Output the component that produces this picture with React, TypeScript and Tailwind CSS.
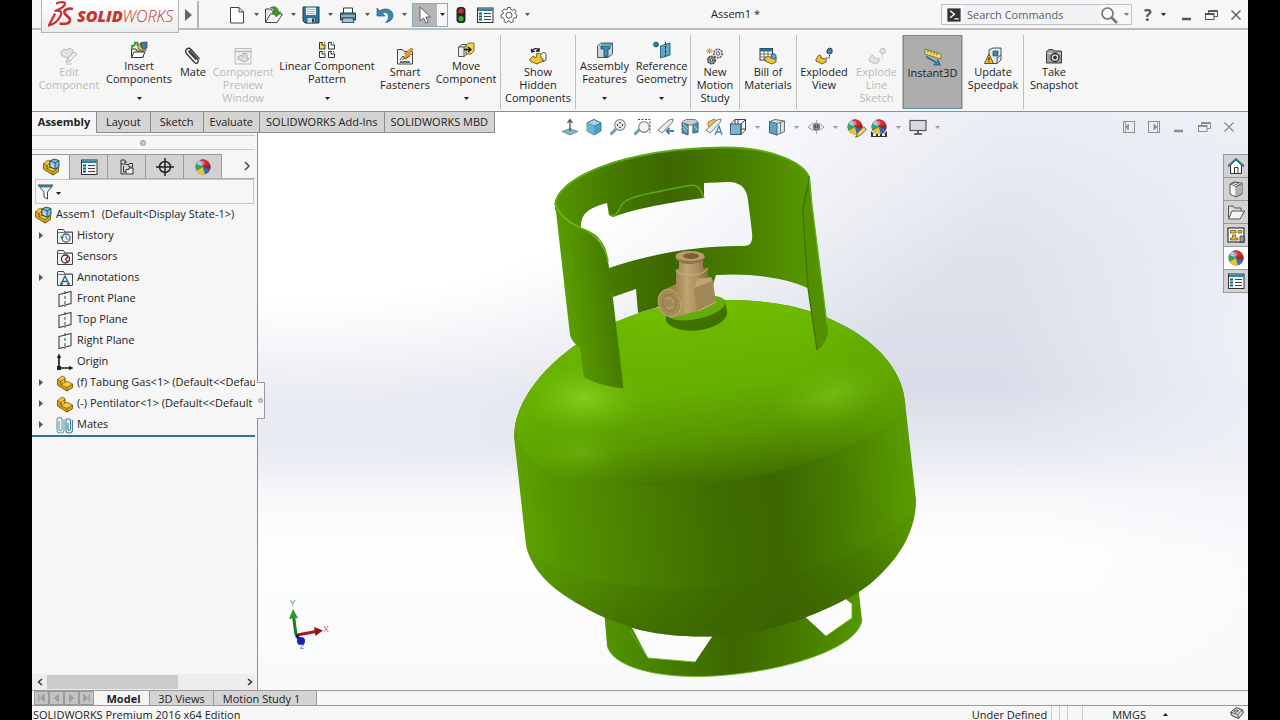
import type { ReactNode } from "react";

// ---------- Small shared pieces ----------

function Icon({ children, size = "size-[18px]", box = "0 0 18 18" }: { children: ReactNode; size?: string; box?: string }) {
    return (
        <svg viewBox={box} className={`${size} shrink-0`} fill="none" aria-hidden="true">
            {children}
        </svg>
    );
}

function Caret({ color = "#222" }: { color?: string }) {
    return (
        <svg viewBox="0 0 5 3" className="h-[3px] w-[5px] shrink-0" aria-hidden="true">
            <path d="M0 0H5L2.5 3Z" fill={color} />
        </svg>
    );
}

function PartShape() {
    return (
        <g stroke="#7a5f14" strokeWidth=".8" strokeLinejoin="round">
            <path d="M1.500 5.500L6 2L9 3.500V8L12 7.500L16.500 10V13.500L11 17L1.500 11Z" fill="#f5c93c" />
            <path d="M1.500 5.500L5 7.500V11L11 13.500L16.500 10V13.500L11 17L1.500 11Z" fill="#dca21c" />
            <path d="M5 7.500L9 4.500V8L5 11ZM11 13.500V17" />
        </g>
    );
}

const PartIcon = () => (
    <Icon>
        <PartShape />
    </Icon>
);

const AssemblyIcon = () => (
    <Icon>
        <PartShape />
        <path d="M8 3L12 1L17 2.500V9L13 11L8 9Z" fill="#7db9d6" stroke="#1f3f50" strokeWidth=".9" />
        <path d="M8 3L13 5V11L8 9Z" fill="#a9d3e6" stroke="#1f3f50" strokeWidth=".8" />
        <path d="M13 5L17 2.500" stroke="#1f3f50" strokeWidth=".8" />
    </Icon>
);

const BallIcon = () => (
    <Icon>
        <circle cx="9" cy="9" r="7.500" fill="#2f6db8" />
        <path d="M9 9L6 2A7.500 7.500 0 0 1 16 6Z" fill="#d22b2b" />
        <path d="M9 9L16 6A7.500 7.500 0 0 1 16 12Z" fill="#a82020" />
        <path d="M9 9L11 16.200A7.500 7.500 0 0 1 2.500 12.500Z" fill="#eac42f" />
        <path d="M9 9L2.500 12.500A7.500 7.500 0 0 1 2 6Z" fill="#3fa349" />
        <path d="M9 9L2 6A7.500 7.500 0 0 1 6 2Z" fill="#6fb0dd" />
        <path d="M9 9L11 16.200A7.500 7.500 0 0 0 16 12Z" fill="#2f6db8" />
        <ellipse cx="7" cy="5" rx="3.500" ry="2.200" fill="#fff" opacity=".4" />
    </Icon>
);

const ListIcon = () => (
    <Icon>
        <rect x="1.500" y="2" width="15.500" height="14.500" fill="#f4f8fa" stroke="#333" />
        <rect x="2" y="2.500" width="14.500" height="2.500" fill="#2b86a8" />
        <path d="M3 7.500H6M3 10.500H6M3 13.500H6" stroke="#1d5b78" strokeWidth="1.800" />
        <path d="M8 7.500H15M8 10.500H15M8 13.500H15" stroke="#444" strokeWidth="1" />
    </Icon>
);

// ---------- Title bar icons ----------

const NewIcon = () => (
    <Icon>
        <path d="M2.500 1.500H11L15.500 6V17H2.500Z" fill="#fff" stroke="#444" />
        <path d="M11 1.500V6H15.500" stroke="#444" />
    </Icon>
);

const OpenIcon = () => (
    <Icon size="size-5" box="0 0 20 20">
        <path d="M1.500 4H7L8.500 6H14V9L11 17H1.500Z" fill="#e4e4e4" stroke="#444" />
        <path d="M1.500 17.500L6.500 9H18.500L13 17.500Z" fill="#fafafa" stroke="#444" />
        <path d="M6.500 2.500C11 .5 14.500 3 14.500 7H17L12.500 12L8 7H10.500C10.500 5 9 3.500 6.500 2.500Z" fill="#3d9b2c" stroke="#23691a" strokeWidth=".6" />
    </Icon>
);

const SaveIcon = () => (
    <Icon>
        <path d="M1 1H17V17H3L1 15Z" fill="#2f7396" stroke="#173e52" />
        <rect x="4" y="1.500" width="10" height="7.500" fill="#e9eef0" />
        <path d="M5 3.500H13M5 5.500H13M5 7.500H13" stroke="#9fb0b8" strokeWidth=".8" />
        <rect x="5" y="11.500" width="8" height="5.500" fill="#c9d3d8" stroke="#173e52" strokeWidth=".6" />
        <rect x="10" y="12.500" width="2" height="4" fill="#1c3e50" />
    </Icon>
);

const PrintIcon = () => (
    <Icon>
        <path d="M4.500 7V2H13.500V7" fill="#fff" stroke="#333" />
        <path d="M1.500 7H16.500V14H1.500Z" fill="#4f7f97" stroke="#1e3a48" />
        <path d="M2 10H16" stroke="#cfdde4" />
        <path d="M4 12H14L15 16.500H3Z" fill="#9fc5d8" stroke="#1e3a48" strokeWidth=".8" />
    </Icon>
);

const UndoIcon = () => (
    <Icon>
        <path d="M1 2V10H9L6.500 7.500C9 5.500 13 7 12.500 11C12.300 13 11.500 15 9.500 16.500C14 16 17 13 17 9.500C17 3.500 9 1 3.800 4.800Z" fill="#3d86ad" stroke="#235b7a" strokeWidth=".7" />
    </Icon>
);

const CursorIcon = () => (
    <Icon>
        <path d="M4 1L14.500 11H9.800L12.300 16L10 17L7.600 12L4 15Z" fill="#fff" stroke="#555" strokeWidth=".9" />
    </Icon>
);

const TrafficIcon = () => (
    <Icon>
        <rect x="4.500" y="1" width="9" height="16" rx="3.500" fill="#242424" />
        <circle cx="9" cy="5" r="2.700" fill="#b5342f" />
        <circle cx="9" cy="12.700" r="2.700" fill="#41a63c" />
    </Icon>
);

const GearIcon = () => (
    <Icon>
        <path d="M7.600 1.500H10.400L10.900 3.600L12.500 4.300L14.400 3.200L16.200 5.200L15 7L15.500 8.200L17 9.500L16 12L14 12L13 13.500L13.300 15.700L10.700 16.700L9.400 15H8L6.500 16.700L4 15.500L4.400 13.300L3.500 12.200L1.300 11.800L1 9L3 8L3.500 6.500L2.200 4.800L4.200 2.800L6 4L7.200 3.500Z" fill="#fff" stroke="#555" strokeLinejoin="round" />
        <circle cx="9" cy="9.200" r="3" stroke="#555" />
    </Icon>
);

// ---------- Window buttons ----------

const MinimizeIcon = () => <Icon><path d="M4 13H13" stroke="currentColor" strokeWidth="2.500" /></Icon>;
const RestoreIcon = () => (
    <Icon>
        <path d="M6.500 7V4.500H15.500V10.500H12" stroke="currentColor" />
        <path d="M6.500 5.500H15.500" stroke="currentColor" />
        <rect x="3.500" y="7.500" width="8.500" height="6" stroke="currentColor" />
        <path d="M3.500 8.500H12" stroke="currentColor" />
    </Icon>
);
const CloseIcon = () => <Icon><path d="M4.500 4.500L13.500 13.500M13.500 4.500L4.500 13.500" stroke="currentColor" strokeWidth="1.300" /></Icon>;
const PanelIcon = ({ side }: { side: "left" | "right" }) => (
    <Icon>
        <rect x="3.500" y="3.500" width="11" height="11" stroke="currentColor" />
        {side === "left" ? (
            <path d="M5.500 4V14M8.500 6V12L5.500 9Z" stroke="currentColor" fill="currentColor" strokeWidth=".8" />
        ) : (
            <path d="M12.500 4V14M9 6V12L12 9Z" stroke="currentColor" fill="currentColor" strokeWidth=".8" />
        )}
    </Icon>
);

// ---------- Ribbon ----------

const EditIcon = () => (
    <Icon>
        <path d="M1 5L4 2L7 3L9 1L13 3L12 7L7 11L1 8Z" fill="#e0e0e0" stroke="#bbb" />
        <path d="M6 15L7 12L14 5L17 7L10 14Z" fill="#eee" stroke="#b5b5b5" />
        <path d="M8 12L10 14M6 17H12" stroke="#bbb" />
    </Icon>
);
const InsertIcon = () => (
    <Icon>
        <path d="M1.500 8H6L7 10H13V16.500H1.500Z" fill="#eee" stroke="#333" />
        <path d="M1.500 16.500L4 11H15L12.500 16.500Z" fill="#fff" stroke="#333" />
        <path d="M2 8V4M2 6L6 2.500M4 1.500H7.500V5" stroke="#2f9a28" strokeWidth="1.700" />
        <path d="M8 4L11 2V6L16 8V10L8 8Z" fill="#f0c331" stroke="#5a4a12" strokeWidth=".7" />
        <path d="M11 1.500L17 1V7L13 8L11 6Z" fill="#3b7f9f" stroke="#1b3d50" strokeWidth=".7" />
    </Icon>
);
const ClipIcon = () => (
    <Icon>
        <path d="M6 4L13.500 12.500C15.500 15 12.500 17.500 10.500 15.500L2.500 6.500C0 3 4 -.5 7 2.500L15.500 12" stroke="#333" strokeWidth="1.300" />
        <path d="M12 12.500L5.500 5.500C4 4 5.500 3 6.500 4" stroke="#333" strokeWidth="1.200" />
    </Icon>
);
const PreviewIcon = () => (
    <Icon>
        <rect x="1" y="1.500" width="16" height="15.500" fill="#f0f0f0" stroke="#bbb" />
        <path d="M1 4.500H17" stroke="#bbb" strokeWidth="1.500" />
        <path d="M4 10L7 8L9 10L9 6L13 7V11L15 12L11 15L4 12Z" fill="#ddd" stroke="#b0b0b0" />
    </Icon>
);
const PatternIcon = () => (
    <Icon>
        <path d="M1.500 1.500H4V4H7V8H1.500Z" fill="#f2dd55" stroke="#333" />
        <path d="M10.500 1.500H13V4H16.500V8H10.500ZM1.500 10.500H4V13H7V16.500H1.500ZM10.500 10.500H13V13H16.500V16.500H10.500Z" fill="#fff" stroke="#333" />
        <path d="M4 1.500H7V4M13 1.500H16V4M4 10.500H7V13M13 10.500H16V13" stroke="#555" strokeDasharray="1 1" />
    </Icon>
);
const FastenerIcon = () => (
    <Icon>
        <path d="M1.500 2.500H6.500L8 4.500H16.500V17H1.500Z" fill="#f1f1f1" stroke="#444" />
        <path d="M4 13L7 9L9 12L14 9" stroke="#444" />
        <path d="M4 15H14" stroke="#444" strokeWidth="1.500" />
        <path d="M15 1L8 7H11L6 13L16 7H13L17 2Z" fill="#f0a62b" stroke="#9a5c10" strokeWidth=".6" />
    </Icon>
);
const MoveIcon = () => (
    <Icon>
        <path d="M1.500 6L5 3.500H10V13L7 15.500H1.500Z" fill="#eee" stroke="#555" />
        <path d="M1.500 6H7V15.500M7 6L10 3.500" stroke="#555" />
        <path d="M9 4L12 2H17V10L14 13H9Z" fill="#f1d64a" stroke="#5c5013" strokeWidth=".8" />
        <path d="M7 8.500H14M11 6L14 8.500L11 11" stroke="#111" strokeWidth="1.300" />
    </Icon>
);
const HiddenIcon = () => (
    <Icon>
        <path d="M3 4C5 1 8 1 10 3M10 1V4H7M2 2L3 5L6 4" stroke="#111" strokeWidth="1.300" />
        <path d="M1 12L4 9L7 11L8 6L12 7V11L14 12V14L8 17L1 14Z" fill="#f0c331" stroke="#6b5310" strokeWidth=".9" />
        <path d="M12 7L15 5L17 7V13L14 15V12" fill="#eee" stroke="#444" strokeWidth=".9" />
    </Icon>
);
const FeaturesIcon = () => (
    <Icon>
        <path d="M1.500 5L5 2H16.500V13L12 16.500H1.500Z" fill="#c9d5da" stroke="#4a5a62" />
        <path d="M5 5H14V8H12V16H8V8H5Z" fill="#3a8db0" stroke="#1b4d63" strokeWidth=".8" />
        <path d="M5 5L7 3H16L14 5" fill="#78b9d3" stroke="#1b4d63" strokeWidth=".6" />
    </Icon>
);
const GeometryIcon = () => (
    <Icon>
        <circle cx="3" cy="3.500" r="2.500" fill="#2f7b9d" stroke="#1b4d63" strokeWidth=".7" />
        <path d="M7.500 5L17 2V14L7.500 17Z" fill="#5fa9c6" stroke="#1b4d63" strokeWidth=".8" />
        <path d="M12.500 1V17" stroke="#123a4c" strokeDasharray="3 1" />
    </Icon>
);
const MotionIcon = () => (
    <Icon>
        <path d="M3.500 1V7M1 2L6 6M6 2L1 6M0 4H7" stroke="#dc8c2c" strokeWidth=".9" />
        <circle cx="12" cy="6.500" r="4.200" fill="#eee" stroke="#666" strokeWidth="1.600" strokeDasharray="2 .8" />
        <circle cx="12" cy="6.500" r="1.700" fill="#fff" stroke="#555" />
        <circle cx="5.500" cy="13" r="3.800" fill="#999" stroke="#444" strokeWidth="1.600" strokeDasharray="2 .8" />
        <circle cx="5.500" cy="13" r="1.300" fill="#fff" stroke="#444" />
    </Icon>
);
const BomIcon = () => (
    <Icon>
        <rect x="1" y="1.500" width="12.500" height="11.500" fill="#fff" stroke="#333" />
        <rect x="1" y="1.500" width="12.500" height="3" fill="#2d728f" />
        <path d="M1 7H13M1 10H13M5 4V13M9 4V13" stroke="#555" strokeWidth=".8" />
        <path d="M6 11L9 9L12 11L13 8L17 10V15L13 17L6 14Z" fill="#f0c331" stroke="#5c4a10" strokeWidth=".8" />
        <path d="M12 8L15 6.500L17 8V12L13 12Z" fill="#5fa9c6" stroke="#1b4d63" strokeWidth=".7" />
    </Icon>
);
const ExplodedIcon = ({ muted = false }: { muted?: boolean }) => (
    <Icon>
        <path d="M1 12L4 8L6 9V11L11 12V15L7 17L1 14Z" fill={muted ? "#e2e2e2" : "#f0c331"} stroke={muted ? "#bbb" : "#6b5310"} strokeWidth=".9" />
        <path d="M12 3L14 1L17 2V6L15 7L12 6Z" fill={muted ? "#e2e2e2" : "#4b83b5"} stroke={muted ? "#bbb" : "#1d3b5a"} strokeWidth=".9" />
        <path d="M14.500 8V11H10" stroke={muted ? "#bbb" : "#222"} strokeDasharray="1.500 1" />
    </Icon>
);
const RulerIcon = () => (
    <Icon>
        <path d="M1 1L17 6V11L1 6Z" fill="#f2e06c" stroke="#6b5a18" strokeWidth=".7" />
        <path d="M4 2V4.500M7 3V5.500M10 4V6.500M13 5V7.500" stroke="#5c4a10" strokeWidth=".8" />
        <path d="M2 8.500L13 15M9.500 16.500H15.500L13.500 11.500" stroke="#2b6ea0" strokeWidth="2" />
    </Icon>
);
const SpeedpakIcon = () => (
    <Icon>
        <path d="M5 3L9 1H17V13L13 16.500H5Z" fill="#e2ebef" stroke="#40525b" />
        <path d="M9 4H14V9H9Z" fill="#3e86a8" stroke="#1b4d63" strokeWidth=".7" />
        <path d="M13 16V11L17 8" stroke="#40525b" />
        <path d="M5 7L9.500 16.500H.5Z" fill="#f3bf2c" stroke="#5c3d08" strokeWidth=".9" />
        <path d="M5 10.500V13.200M5 14.300V15.300" stroke="#111" strokeWidth="1.200" />
    </Icon>
);
const CameraIcon = () => (
    <Icon>
        <path d="M1.500 4.500L4 2.500H8L9 4H16.500V16H1.500Z" fill="#9d9d9d" stroke="#3c3c3c" />
        <path d="M2 6.500H16" stroke="#ddd" />
        <circle cx="10" cy="10.500" r="4" fill="#e5e5e5" stroke="#222" strokeWidth="1.300" />
        <circle cx="10" cy="10.500" r="1.900" fill="#333" />
    </Icon>
);

interface Command {
    lines: string[];
    icon: ReactNode;
    width: string;
    menu?: boolean;
    disabled?: boolean;
    active?: boolean;
}

const commandGroups: Command[][] = [
    [
        { lines: ["Edit", "Component"], icon: <EditIcon />, width: "w-[66px]", disabled: true },
        { lines: ["Insert", "Components"], icon: <InsertIcon />, width: "w-[74px]", menu: true },
        { lines: ["Mate"], icon: <ClipIcon />, width: "w-[34px]" },
        { lines: ["Component", "Preview", "Window"], icon: <PreviewIcon />, width: "w-[66px]", disabled: true },
        { lines: ["Linear Component", "Pattern"], icon: <PatternIcon />, width: "w-[102px]", menu: true },
        { lines: ["Smart", "Fasteners"], icon: <FastenerIcon />, width: "w-[54px]" },
        { lines: ["Move", "Component"], icon: <MoveIcon />, width: "w-[68px]", menu: true },
    ],
    [{ lines: ["Show", "Hidden", "Components"], icon: <HiddenIcon />, width: "w-[74px]" }],
    [
        { lines: ["Assembly", "Features"], icon: <FeaturesIcon />, width: "w-[57px]", menu: true },
        { lines: ["Reference", "Geometry"], icon: <GeometryIcon />, width: "w-[57px]", menu: true },
    ],
    [{ lines: ["New", "Motion", "Study"], icon: <MotionIcon />, width: "w-[48px]" }],
    [{ lines: ["Bill of", "Materials"], icon: <BomIcon />, width: "w-[56px]" }],
    [
        { lines: ["Exploded", "View"], icon: <ExplodedIcon />, width: "w-[54px]" },
        { lines: ["Explode", "Line", "Sketch"], icon: <ExplodedIcon muted />, width: "w-[51px]", disabled: true },
    ],
    [{ lines: ["Instant3D"], icon: <RulerIcon />, width: "w-[59px]", active: true }],
    [{ lines: ["Update", "Speedpak"], icon: <SpeedpakIcon />, width: "w-[60px]" }],
    [{ lines: ["Take", "Snapshot"], icon: <CameraIcon />, width: "w-[60px]" }],
];

function Ribbon() {
    return (
        <div className="flex h-[82px] shrink-0 border-b border-[#8f8f8f] bg-[#f6f6f6] pt-[5px] pb-[2px] pl-1">
            {commandGroups.map((group, i) => (
                <div key={i} className="flex shrink-0 border-r border-[#bdbdbd] last:border-r-0">
                    {group.map((cmd) => (
                        <button
                            key={cmd.lines.join(" ")}
                            type="button"
                            disabled={cmd.disabled}
                            className={`flex flex-col items-center text-[11px] leading-[13px] whitespace-nowrap ${cmd.width} ${cmd.menu ? "pt-[6px]" : "pt-[12px]"} ${cmd.active ? "border border-[#5c93a6] bg-[#adadad]" : ""} ${cmd.disabled ? "text-[#b9b9b9]" : "text-[#1c1c1c]"}`}
                        >
                            {cmd.icon}
                            {cmd.lines.map((line) => (
                                <span key={line}>{line}</span>
                            ))}
                            {cmd.menu && (
                                <span className="mt-auto pb-[9px]">
                                    <Caret />
                                </span>
                            )}
                        </button>
                    ))}
                </div>
            ))}
        </div>
    );
}

// ---------- Title bar ----------

const quickTools = [
    { label: "New", icon: <NewIcon /> },
    { label: "Open", icon: <OpenIcon /> },
    { label: "Save", icon: <SaveIcon /> },
    { label: "Print", icon: <PrintIcon /> },
    { label: "Undo", icon: <UndoIcon /> },
];

function TitleBar() {
    return (
        <header className="relative z-10 flex h-[30px] shrink-0 items-center border-b-2 border-[#bcbcbc] bg-[#f6f6f6] pt-px">
            <div className="-mt-px ml-[9px] flex h-[33px] w-[138px] items-center self-start border border-t-0 border-[#b5b5b5] bg-linear-to-b from-white to-[#ececec] pl-[6px]">
                <svg viewBox="0 0 26 26" className="mb-1 h-[26px] w-[26px]" fill="none" stroke="#c8332f" aria-hidden="true">
                    <path d="M8 2.500C12 1 17 .5 17 2.500C17 5 12 8 8.500 9.500" strokeWidth="2.200" />
                    <path d="M6.500 10C12 8.500 14.500 11 12.500 15C10 20 5 23.500 .8 24.500C3 20.500 5.500 16 7 12.500" strokeWidth="2.200" />
                    <path d="M25 8C20 7 15.500 9 16.500 12C17.500 15 22.500 16 22 19.500C21.500 22.500 17 23.500 11.500 22.500" strokeWidth="2.700" />
                </svg>
                <span className="ml-[3px] text-[16px] leading-none whitespace-nowrap text-[#c8332f] italic">
                    <b className="font-extrabold">SOLID</b>
                    <span className="font-light">WORKS</span>
                </span>
            </div>
            <button type="button" aria-label="Show menus" className="flex h-7 w-5 items-center justify-center border-r-2 border-[#b5b5b5]">
                <svg viewBox="0 0 7 12" className="h-3 w-[7px]" aria-hidden="true">
                    <path d="M0 0L7 6L0 12Z" fill="#666" />
                </svg>
            </button>
            <div className="flex items-center pl-7">
                {quickTools.map((tool) => (
                    <button key={tool.label} type="button" aria-label={tool.label} className="flex w-[37px] items-center gap-[7px]">
                        <span className="flex w-5 justify-center">{tool.icon}</span>
                        <Caret color="#555" />
                    </button>
                ))}
                <button type="button" aria-label="Select" className="flex h-6 items-center border border-[#8ba9b5]">
                    <span className="flex h-full w-6 items-center justify-center bg-[#b5b5b5]">
                        <CursorIcon />
                    </span>
                    <span className="flex w-[10px] justify-center">
                        <Caret />
                    </span>
                </button>
                <div className="flex items-center gap-[6px] pl-1">
                    <button type="button" aria-label="Rebuild"><TrafficIcon /></button>
                    <button type="button" aria-label="File properties"><ListIcon /></button>
                    <button type="button" aria-label="Options" className="flex items-center gap-[7px]">
                        <GearIcon />
                        <Caret color="#555" />
                    </button>
                </div>
            </div>
            <h1 className="flex-1 text-center text-[11px] text-[#222]">Assem1 *</h1>
            <label className="flex h-[21px] w-[191px] items-center border border-[#c2c2c2] bg-[#f8f8f8] pl-[5px]">
                <Icon size="size-[14px]">
                    <rect x=".5" y=".5" width="17" height="17" fill="#333" />
                    <path d="M4 3.500L9.500 8L4 12.500M9.500 14H15" stroke="#fff" strokeWidth="1.800" />
                </Icon>
                <input
                    type="text"
                    placeholder="Search Commands"
                    aria-label="Search Commands"
                    className="ml-[2px] h-full w-[137px] bg-[#f1f2f6] pl-1 text-[11px] outline-none placeholder:text-[#606060]"
                />
                <Icon>
                    <circle cx="7.500" cy="7.500" r="5.500" stroke="#777" strokeWidth="1.700" />
                    <path d="M11.500 11.500L17 17" stroke="#777" strokeWidth="2.500" />
                </Icon>
                <span className="flex-1" />
                <Caret color="#777" />
                <span className="w-[2px]" />
            </label>
            <div className="flex items-center pl-2 text-[#555]">
                <button type="button" className="flex w-[35px] items-center gap-[9px] pl-1 text-[16px] leading-none font-bold" aria-label="Help">
                    ? <Caret />
                </button>
                <button type="button" aria-label="Minimize" className="flex w-6 justify-center"><MinimizeIcon /></button>
                <button type="button" aria-label="Restore" className="flex w-6 justify-center"><RestoreIcon /></button>
                <button type="button" aria-label="Close" className="flex w-[25px] justify-center"><CloseIcon /></button>
            </div>
        </header>
    );
}

// ---------- Command tabs and feature tree ----------

const commandTabs = ["Assembly", "Layout", "Sketch", "Evaluate", "SOLIDWORKS Add-Ins", "SOLIDWORKS MBD"];

function CommandTabs() {
    return (
        <nav className="relative z-10 flex h-[21px] w-max shrink-0 text-[11px]">
            {commandTabs.map((tab, i) =>
                i === 0 ? (
                    <button key={tab} type="button" className="w-16 bg-[#f6f6f6] font-bold text-[#222]">
                        {tab}
                    </button>
                ) : (
                    <button key={tab} type="button" className="border-r border-b border-[#8c8c8c] bg-[#d4d4d4] px-[6px] whitespace-nowrap text-[#222] nth-2:border-l nth-2:px-[9px] nth-3:px-[9px]">
                        {tab}
                    </button>
                ),
            )}
        </nav>
    );
}

const FolderIcon = ({ children }: { children: ReactNode }) => (
    <Icon>
        <path d="M1.500 3V16.500H16.500V5H9L7.500 2.500H2Z" fill="#f1f1f1" stroke="#444" />
        <path d="M2 5.500H16" stroke="#777" />
        {children}
    </Icon>
);
const PlaneIcon = () => (
    <Icon>
        <path d="M3 4.500L15 1.500V13.500L3 16.500Z" stroke="#444" strokeWidth="1.100" />
        <path d="M9 1V17" stroke="#444" strokeDasharray="3 2" />
    </Icon>
);

const tree = [
    {
        label: "History",
        open: true,
        icon: (
            <FolderIcon>
                <circle cx="10" cy="11" r="4" fill="#fff" stroke="#33677d" strokeWidth="1.300" />
                <path d="M10 8.500V11L12.500 12.500M4.500 9L6 11.500L8 9.500" stroke="#33677d" />
            </FolderIcon>
        ),
    },
    {
        label: "Sensors",
        icon: (
            <FolderIcon>
                <circle cx="9.500" cy="11" r="4" fill="#fff" stroke="#333" strokeWidth="1.300" />
                <path d="M9 12L12 8.500" stroke="#333" strokeWidth="1.300" />
                <path d="M10 12H13V14H10Z" fill="#d43c2c" />
            </FolderIcon>
        ),
    },
    {
        label: "Annotations",
        open: true,
        icon: (
            <FolderIcon>
                <path d="M5 15L9 7L13 15M6.500 12.500H11.500M4 15H7M11 15H14" stroke="#2d6583" strokeWidth="1.300" />
            </FolderIcon>
        ),
    },
    { label: "Front Plane", icon: <PlaneIcon /> },
    { label: "Top Plane", icon: <PlaneIcon /> },
    { label: "Right Plane", icon: <PlaneIcon /> },
    {
        label: "Origin",
        icon: (
            <Icon>
                <path d="M3 3V15H15" stroke="#222" strokeWidth="1.700" />
                <path d="M.8 5L3 .5L5.200 5ZM13 12.800L17.500 15L13 17.200ZM1 13H5V17H1Z" fill="#222" />
            </Icon>
        ),
    },
    { label: "(f) Tabung Gas<1> (Default<<Defau", open: true, icon: <PartIcon /> },
    { label: "(-) Pentilator<1> (Default<<Default", open: true, icon: <PartIcon /> },
    {
        label: "Mates",
        open: true,
        icon: (
            <Icon>
                <path d="M3 5V13C3 15.500 6 15.500 6 13V4C6 .5 1 .5 1 4V14C1 18 8 18 8 14V3" stroke="#6ba3b5" strokeWidth="1.200" />
                <path d="M12 7V13C12 15 14.500 15 14.500 13V5C14.500 2 10 2 10 5V14C10 18 16.500 18 16.500 14V4" stroke="#4f8498" strokeWidth="1.200" />
            </Icon>
        ),
    },
];

const panelTabs = [
    { label: "Feature tree", icon: <AssemblyIcon /> },
    { label: "Properties", icon: <ListIcon /> },
    {
        label: "Configurations",
        icon: (
            <Icon>
                <path d="M3 2V16M3 2H7V6H3M7 4H9M3 16H7" stroke="#333" />
                <path d="M7.500 6.500H11V9H14.500V5.500H11M8 11.500H11V10H15V16H8Z" fill="#eee" stroke="#333" />
                <path d="M5.500 8V14H8" stroke="#333" />
            </Icon>
        ),
    },
    {
        label: "Dimensions",
        icon: (
            <Icon>
                <circle cx="9" cy="9" r="5.500" stroke="#222" strokeWidth="1.500" />
                <path d="M9 0V18M0 9H18" stroke="#222" strokeWidth="1.500" />
            </Icon>
        ),
    },
    { label: "Appearances", icon: <BallIcon /> },
];

function FeatureTree() {
    return (
        <div className="relative flex min-h-0 flex-1 flex-col border-r border-[#8c8c8c] bg-[#f6f6f6] text-[11px] text-[#222]">
            <div className="mt-[2px] mr-[2px] flex h-[15px] items-center justify-center border-y border-[#c9c9c9] pr-[2px]">
                <span className="size-[6px] rounded-full border border-[#999] bg-[#ccc]" />
            </div>
            <div className="mt-1 mr-[2px] flex h-[25px] shrink-0 items-stretch border-b border-[#b0b0b0]">
                {panelTabs.map((tab, i) => (
                    <button
                        key={tab.label}
                        type="button"
                        aria-label={tab.label}
                        className={`flex w-[38px] items-center justify-center border-t border-r border-[#999] ${i === 0 ? "-mb-px bg-[#f6f6f6]" : "bg-[#d2d2d2]"}`}
                    >
                        {tab.icon}
                    </button>
                ))}
                <button type="button" aria-label="More tabs" className="ml-auto flex w-4 items-center justify-center">
                    <svg viewBox="0 0 6 10" className="h-[10px] w-[6px]" fill="none" aria-hidden="true">
                        <path d="M1 1L5 5L1 9" stroke="#444" strokeWidth="1.500" />
                    </svg>
                </button>
            </div>
            <button type="button" aria-label="Filter" className="mr-[3px] ml-[3px] flex h-[25px] shrink-0 items-center gap-px border border-[#c4c4c4] pl-px">
                <Icon>
                    <path d="M1 2H16L10.500 9V16L7 14V9Z" fill="#fff" stroke="#444" />
                    <path d="M1 2H16L14.500 4.500H3Z" fill="#2b7fa6" />
                </Icon>
                <span className="pt-1">
                    <Caret />
                </span>
            </button>
            <div className="mr-[2px] overflow-hidden">
                <div className="flex h-[21px] items-center gap-[4px] pl-[2px] whitespace-pre">
                    <AssemblyIcon />
                    {"Assem1  (Default<Display State-1>)"}
                </div>
                <ul>
                    {tree.map((node) => (
                        <li key={node.label}>
                            <button type="button" className="flex h-[21px] items-center whitespace-nowrap">
                                <span className="w-6 pl-[7px]">
                                    {node.open && (
                                        <svg viewBox="0 0 4 7" className="h-[7px] w-1" aria-hidden="true">
                                            <path d="M0 0L4 3.500L0 7Z" fill="#555" />
                                        </svg>
                                    )}
                                </span>
                                <span className="mr-[3px]">{node.icon}</span>
                                {node.label}
                            </button>
                        </li>
                    ))}
                </ul>
                <div className="h-[2px] bg-[#356f99]" />
            </div>
            <div className="mt-auto mr-[2px] flex h-4 items-center bg-[#ededed]">
                <button type="button" aria-label="Scroll left" className="flex w-[15px] justify-center">
                    <svg viewBox="0 0 6 8" className="h-2 w-[6px]" fill="none" aria-hidden="true">
                        <path d="M5 1L1.500 4L5 7" stroke="#333" strokeWidth="1.500" />
                    </svg>
                </button>
                <div className="flex-1 self-stretch py-px">
                    <div className="h-full w-2/3 bg-[#cbcbcb]" />
                </div>
                <button type="button" aria-label="Scroll right" className="flex w-[11px] justify-center">
                    <svg viewBox="0 0 6 8" className="h-2 w-[6px]" fill="none" aria-hidden="true">
                        <path d="M1 1L4.500 4L1 7" stroke="#333" strokeWidth="1.500" />
                    </svg>
                </button>
            </div>
            {/* Collapse handle on the splitter */}
            <button
                type="button"
                aria-label="Collapse panel"
                className="absolute top-[249px] -right-2 z-10 flex h-[37px] w-2 items-center justify-center border border-l-0 border-[#9a9a9a] bg-[#f6f6f6]"
            >
                <span className="size-[5px] shrink-0 rounded-full border border-[#999] bg-[#ccc]" />
            </button>
        </div>
    );
}

// ---------- Graphics area ----------

const Lens = ({ x = 11, y = 7 }: { x?: number; y?: number }) => (
    <>
        <path d="M1.500 16.500L7 11" stroke="#6d9fb2" strokeWidth="3" />
        <circle cx={x} cy={y} r="5.300" fill="#f3f6f8" stroke="#888" strokeWidth="1.200" />
    </>
);

const BrushShape = () => <path d="M1 12L3 10L12 2L16 1L15.500 4L8 12L5 15Z" fill="#ececec" stroke="#6f6f6f" strokeWidth=".9" />;

const viewTools = [
    {
        label: "Normal to",
        icon: (
            <Icon>
                <path d="M1 13.500L9 10.500L17 13.500L9 17Z" fill="#7fb5ca" stroke="#4f8498" strokeWidth=".7" />
                <path d="M9 13V2M6.500 5L9 1.500L11.500 5" stroke="#444" strokeWidth="1.200" />
            </Icon>
        ),
    },
    {
        label: "View cube",
        icon: (
            <Icon>
                <path d="M2 5L9 1.500L16 5V13L9 17L2 13Z" fill="#4d9fc5" stroke="#2b6680" strokeWidth=".8" />
                <path d="M2 5L9 8L16 5L9 1.500Z" fill="#a9d6e8" stroke="#2b6680" strokeWidth=".7" />
                <path d="M2 5L9 8V17L2 13Z" fill="#6db4d2" />
            </Icon>
        ),
    },
    { label: "Zoom to fit", icon: <Icon><Lens /><path d="M11 3.500L9.500 5.200H12.500ZM11 10.500L9.500 8.800H12.500ZM7.500 7L9.200 5.500V8.500ZM14.500 7L12.800 5.500V8.500Z" fill="#333" /></Icon> },
    { label: "Zoom to area", icon: <Icon><Lens y={9} /><path d="M5 1.500H17V15" stroke="#444" strokeDasharray="2 1.500" /></Icon> },
    { label: "Previous view", icon: <Icon><BrushShape /><path d="M17 13H10M12.500 10L9.500 13L12.500 16" stroke="#3d86a5" strokeWidth="1.800" /></Icon> },
    {
        label: "Section view",
        icon: (
            <Icon>
                <path d="M1 4L5 1.500H14L17 4V14L12 15V7H7V17L1 15Z" fill="#c4ccd0" stroke="#586269" strokeWidth=".8" />
                <path d="M1.500 5L7 6.500V16.500L1.500 14.500ZM12 6.500L17 5V14L12 15Z" fill="#5093ae" stroke="#335c6e" strokeWidth=".7" />
                <path d="M1.500 9L6 14M2 6L7 11M12.500 8L17 12" stroke="#d7e6ec" strokeWidth=".8" />
            </Icon>
        ),
    },
    { label: "Dynamic annotation", icon: <Icon><path d="M3 4L9 1L14 4L7 10L3 8Z" fill="#f1bd4a" stroke="#8f6a1c" strokeWidth=".7" /><BrushShape /><path d="M10 17L14 8L17 17M11 14H16" stroke="#3d86a5" strokeWidth="1.300" /></Icon> },
    {
        label: "View orientation",
        menu: true,
        icon: (
            <Icon>
                <path d="M1.500 6H12V16.500H1.500Z" fill="#7ab6cf" stroke="#355f70" />
                <path d="M1.500 6L6 1.500H16.500V12L12 16.500V6L16.500 1.500M6 1.500V6M12 11H16M9 1.500V6" stroke="#444" />
            </Icon>
        ),
    },
    {
        label: "Display style",
        menu: true,
        icon: (
            <Icon>
                <path d="M1.500 3.500L7 1.500L16.500 3V13.500L9 17L1.500 14.500Z" fill="#d5dfe3" stroke="#55656d" strokeWidth=".9" />
                <path d="M1.500 3.500L9 5.500V17L1.500 14.500Z" fill="#5fa3bd" stroke="#335c6e" strokeWidth=".8" />
                <path d="M9 5.500L16.500 3M12.500 4.500V15" stroke="#55656d" strokeWidth=".8" />
            </Icon>
        ),
    },
    {
        label: "Hide or show items",
        menu: true,
        icon: (
            <Icon>
                <path d="M1 9C5 4 13 4 17 9C13 13.500 5 13.500 1 9Z" fill="#e7e7e7" stroke="#999" />
                <circle cx="9.500" cy="8.800" r="3.600" fill="#777" />
                <circle cx="9.500" cy="8.800" r="1.300" fill="#222" />
                <path d="M9.500 2V16" stroke="#999" strokeWidth=".8" />
            </Icon>
        ),
    },
    { label: "Edit appearance", icon: <span className="relative block size-[18px]"><BallIcon /><span className="absolute right-[-3px] bottom-[-2px]"><Icon size="size-3"><path d="M1 17L4 10L13 1L17 5L8 14Z" fill="#efd277" stroke="#6b5310" strokeWidth="1.300" /></Icon></span></span> },
    { label: "Apply scene", menu: true, icon: <span className="relative block size-[18px]"><BallIcon /><span className="absolute inset-x-0 bottom-[-2px]"><Icon><path d="M1 11V17H17V11L14 14H4Z" fill="#333" /><path d="M3 14H6V16H3ZM8 14H10V16H8ZM12 14H15V16H12Z" fill="#eee" /></Icon></span></span> },
    {
        label: "View settings",
        menu: true,
        icon: (
            <Icon>
                <rect x="1" y="2.500" width="16" height="10" fill="#d8dadd" stroke="#555" strokeWidth="1.200" />
                <path d="M9 13V16M5 16H13" stroke="#444" strokeWidth="1.500" />
            </Icon>
        ),
    },
];

const taskPane = [
    { label: "Resources", icon: <Icon><path d="M3.500 8V16.500H14.500V8L9 3Z" fill="#fff" stroke="#333" /><path d="M1 9.500L9 2L17 9.500" stroke="#2b7791" strokeWidth="2" /><path d="M7.500 16V10.500H11V16" stroke="#333" /></Icon> },
    { label: "Design library", icon: <Icon><path d="M3 4L7 2L15 3V14L9 17L3 14Z" fill="#fff" stroke="#555" /><path d="M3 4L9 6.500V17M9 6.500L15 3.500M5 3L11 5.500V16M7.500 2L13 4.500V15" stroke="#555" strokeWidth=".9" /></Icon> },
    { label: "File explorer", icon: <Icon><path d="M1.500 16V3H6L7.500 5H14V8" fill="#ddd" stroke="#555" /><path d="M1.500 16L5 8H17.500L13 16Z" fill="#f4f4f4" stroke="#555" /></Icon> },
    { label: "View palette", icon: <Icon><rect x="1" y="2" width="16" height="14" fill="#fff" stroke="#333" strokeWidth="1.200" /><path d="M3.500 4.500H9V7H3.500ZM11 4.500H15V7H11ZM5.500 9H8.500V12H11V14H3.500V12H5.500Z" fill="#eec03a" stroke="#6b5310" strokeWidth=".8" /><path d="M13 10H17V16H13Z" fill="#999" stroke="#333" strokeWidth=".8" /></Icon> },
    { label: "Appearances", icon: <BallIcon /> },
    { label: "Custom properties", icon: <ListIcon /> },
];

// Gas cylinder assembly plus the axis triad
function ModelView() {
    return (
        <svg viewBox="258 112 990 578" className="absolute inset-0 h-full w-full" role="img" aria-label="Gas cylinder model">
            <defs>
                <linearGradient id="band" x1="514" x2="916" y1="500" y2="460" gradientUnits="userSpaceOnUse">
                    <stop offset="0" stopColor="#5fa500" />
                    <stop offset=".1" stopColor="#559400" />
                    <stop offset=".3" stopColor="#4a8000" />
                    <stop offset=".5" stopColor="#3f6d00" />
                    <stop offset=".65" stopColor="#3c6700" />
                    <stop offset=".8" stopColor="#467b00" />
                    <stop offset="1" stopColor="#5c9e00" />
                </linearGradient>
                <linearGradient id="dome" x1="690" x2="715" y1="300" y2="484" gradientUnits="userSpaceOnUse">
                    <stop offset="0" stopColor="#70be00" />
                    <stop offset=".5" stopColor="#66ae00" />
                    <stop offset=".75" stopColor="#589600" />
                    <stop offset="1" stopColor="#416f00" />
                </linearGradient>
                <linearGradient id="domeSide" x1="514" x2="916" y1="0" y2="0" gradientUnits="userSpaceOnUse">
                    <stop offset="0" stopColor="#62ad00" />
                    <stop offset=".35" stopColor="#62ad00" stopOpacity="0" />
                    <stop offset=".7" stopColor="#5da200" stopOpacity="0" />
                    <stop offset="1" stopColor="#5da200" />
                </linearGradient>
                <linearGradient id="belly" x1="700" x2="710" y1="565" y2="640" gradientUnits="userSpaceOnUse">
                    <stop offset="0" stopColor="#3a6300" stopOpacity=".1" />
                    <stop offset="1" stopColor="#3a6300" stopOpacity=".75" />
                </linearGradient>
                <linearGradient id="collar" x1="555" x2="812" y1="0" y2="0" gradientUnits="userSpaceOnUse">
                    <stop offset="0" stopColor="#549500" />
                    <stop offset=".25" stopColor="#447700" />
                    <stop offset=".45" stopColor="#3c6700" />
                    <stop offset=".7" stopColor="#477c00" />
                    <stop offset="1" stopColor="#579800" />
                </linearGradient>
                <linearGradient id="flap" x1="558" x2="622" y1="300" y2="292" gradientUnits="userSpaceOnUse">
                    <stop offset="0" stopColor="#5ca300" />
                    <stop offset=".5" stopColor="#508c00" />
                    <stop offset="1" stopColor="#427300" />
                </linearGradient>
                <linearGradient id="foot" x1="604" x2="862" y1="0" y2="0" gradientUnits="userSpaceOnUse">
                    <stop offset="0" stopColor="#539400" />
                    <stop offset=".25" stopColor="#467c00" />
                    <stop offset=".5" stopColor="#3c6700" />
                    <stop offset=".75" stopColor="#467a00" />
                    <stop offset="1" stopColor="#559700" />
                </linearGradient>
                <linearGradient id="brass" x1="675" x2="708" y1="0" y2="0" gradientUnits="userSpaceOnUse">
                    <stop offset="0" stopColor="#9c8350" />
                    <stop offset=".35" stopColor="#bea470" />
                    <stop offset=".7" stopColor="#a88f5c" />
                    <stop offset="1" stopColor="#7d6840" />
                </linearGradient>
                <radialGradient id="shine">
                    <stop offset="0" stopColor="#8dd62c" stopOpacity=".75" />
                    <stop offset="1" stopColor="#74c010" stopOpacity="0" />
                </radialGradient>
                <clipPath id="bodyClip">
                    <path d="M514 437C514 402 545 362 590 336C640 303 720 292 790 306C860 322 902 362 905 402L916 500C916 535 895 563 870 584C850 600 800 623 760 631C725 638 680 639 640 630C612 622 590 612 567 597C545 583 530 565 526 545Z" />
                </clipPath>
            </defs>

            {/* Foot ring */}
            <path
                fillRule="evenodd"
                fill="url(#foot)"
                d="M604 610L607 645C611 665 650 677 700 676.500C775 675 858 650 862 620L858 585ZM628 620L648 658L695 662L718 628ZM800 612L826 636L852 618V604L843 597Z"
            />
            <path d="M607 645C611 665 650 677 700 676.500C775 675 858 650 862 620M630 630L648 658L695 662M826 636L852 618V604" fill="none" stroke="#6fb818" strokeWidth=".9" />

            {/* Tank */}
            <g clipPath="url(#bodyClip)">
                <path d="M500 290H930V650H500Z" fill="url(#band)" />
                <path d="M500 420H514C520 460 545 478 590 483C650 490 740 485 800 465C850 448 890 430 906 405L930 280H500Z" fill="url(#dome)" />
                <path d="M500 420H514C520 460 545 478 590 483C650 490 740 485 800 465C850 448 890 430 906 405L930 280H500Z" fill="url(#domeSide)" opacity=".6" />
                <path d="M526 545C550 578 620 590 700 587C790 583 880 555 917 505V650H500Z" fill="url(#belly)" />
                <ellipse cx="583" cy="398" rx="62" ry="36" fill="url(#shine)" />
                <ellipse cx="832" cy="395" rx="62" ry="32" fill="url(#shine)" opacity=".6" transform="rotate(-14 832 395)" />
                <ellipse cx="580" cy="452" rx="42" ry="26" fill="url(#shine)" opacity=".35" />
            </g>

            {/* Neck ring */}
            <path d="M666 314V321C672 332 696 333 712 327C724 322 727 317 727 312L725 300Z" fill="#3f7000" />
            <ellipse cx="696" cy="308" rx="30" ry="11" fill="#62ad08" transform="rotate(-12 696 308)" />

            {/* Collar back wall */}
            <path
                fillRule="evenodd"
                fill="url(#collar)"
                d="M555 203C558 178 620 148 725 147C775 147 806 165 809 178L812 290C795 281 760 272 716 275L712 288L672 303L638 313L636 289L613 297L600 240L581 230L555 210ZM581 228C580 212 592 207 607 203L609 215L613 217C640 207 680 201 704 198V183L728 182C742 182 747 190 748 200L752 232C753 243 750 246 744 246C700 245 650 254 609 268L606 250C602 240 596 232 581 228Z"
            />
            <path d="M555 205C558 179 620 148.500 725 147.500C775 147.500 806 165 809 178" fill="none" stroke="#5cab08" strokeWidth="1.800" />
            <path d="M609 214C614 219 619 212 621 206C624 199 632 196 690 185.500C700 184 701 192 704 198" fill="none" stroke="#5cab10" strokeWidth="1.500" />

            {/* Collar flaps */}
            <path d="M809 176C809 190 803 200 803 215L808 288L817 350C824 346 828 337 828 330L812 205Z" fill="#529000" />
            <path d="M809 176C809 190 802 200 803 215L808 288L817 350" fill="none" stroke="#407100" strokeWidth="1.300" />
            <path d="M809.500 178L812 205L827 325" fill="none" stroke="#66b30e" strokeWidth="1.300" />
            <path d="M555 203L570 335C572 342 577 345 580 348L584 377C595 384 610 387 623.500 388.500L612 290L608 262C607 250 598 234 581 228C565 221 558 213 555 203Z" fill="url(#flap)" />
            <path d="M555 203C558 213 565 221 581 228C598 234 607 250 608 262" fill="none" stroke="#69b913" strokeWidth="1.600" />

            {/* Valve */}
            <path d="M676 270V285L694 292L708 284V270C700 264 684 264 676 270Z" fill="url(#brass)" />
            <path d="M679 260V270C684 276 698 276 703 268V260Z" fill="url(#brass)" />
            <path d="M676 270C680 277 703 277 708 268" fill="none" stroke="#c4aa77" strokeWidth="1.300" />
            <path d="M675.500 257C675 266 704 267 705 256Z" fill="#8f754a" />
            <ellipse cx="690" cy="256" rx="14.500" ry="5" fill="#b99e6a" />
            <ellipse cx="691" cy="256" rx="8" ry="3" fill="#7b6034" />
            <path d="M694 288L713 281L716 303L697 312Z" fill="#a08757" />
            <path d="M694 288L697 279L711 277L713 281Z" fill="#bea472" />
            <path d="M698 311L716 302" stroke="#cdb380" />
            <path d="M664 290L680 282L694 288L697 311L676 317Z" fill="url(#brass)" />
            <ellipse cx="669.500" cy="303" rx="11" ry="14" fill="#a58b59" stroke="#c0a673" transform="rotate(-18 669.500 303)" />
            <ellipse cx="669.500" cy="303" rx="6.500" ry="8.500" fill="none" stroke="#8d7548" strokeWidth=".8" transform="rotate(-18 669.500 303)" />
            <path d="M666 299C670 297 673 299 673 303M666 307C669 309 672 308 673 306" fill="none" stroke="#c0a673" />

            {/* Axis triad */}
            <g fontFamily="Liberation Sans, sans-serif" fontSize="9">
                <path d="M296 635L293.500 616" stroke="#1f7a22" strokeWidth="3" />
                <path d="M289 619L293 609L298 618Z" fill="#289a2c" />
                <path d="M297 635L316 631.500" stroke="#a81c1c" strokeWidth="3" />
                <path d="M314 627L323 630.500L315.500 636Z" fill="#8f1616" />
                <path d="M296 635L300 640" stroke="#111c66" strokeWidth="3" />
                <circle cx="301" cy="641" r="4" fill="#1d1fae" />
                <text x="289.500" y="606" fill="#5d9c60">Y</text>
                <text x="323" y="632" fill="#c47474">X</text>
                <text x="300" y="649" fontSize="7" fill="#5355c4">Z</text>
            </g>
        </svg>
    );
}

function Viewport() {
    return (
        <section className="relative min-w-0 flex-1 overflow-hidden bg-white">
            <div className="absolute inset-0 bg-[linear-gradient(to_bottom,#eceef5_0%,#dfe2ec_25%,#dadde9_48%,#e6e8f1_58%,#f8f8fb_66%,#fefefe_76%,#f8f9fb_100%)]" />
            <div className="absolute inset-0 bg-[radial-gradient(ellipse_70%_54%_at_5%_8%,white_45%,transparent_100%)]" />
            <div className="absolute inset-0 bg-[radial-gradient(ellipse_30%_60%_at_105%_40%,#f1f3f8_0%,transparent_100%)]" />
            <ModelView />
            <div className="relative flex h-[30px] items-center justify-center pr-[3px]">
                {viewTools.map((tool) => (
                    <button key={tool.label} type="button" aria-label={tool.label} className="flex items-center">
                        <span className="flex w-6 justify-center">{tool.icon}</span>
                        {tool.menu && (
                            <span className="flex w-[15px] justify-center">
                                <Caret color="#999" />
                            </span>
                        )}
                    </button>
                ))}
            </div>
            <div className="absolute top-[6px] right-[7px] flex text-[#8d8d93]">
                <button type="button" aria-label="Show left pane" className="flex w-[25px] justify-center"><PanelIcon side="left" /></button>
                <button type="button" aria-label="Show right pane" className="flex w-[25px] justify-center"><PanelIcon side="right" /></button>
                <button type="button" aria-label="Minimize document" className="flex w-[25px] justify-center"><MinimizeIcon /></button>
                <button type="button" aria-label="Restore document" className="flex w-[25px] justify-center"><RestoreIcon /></button>
                <button type="button" aria-label="Close document" className="flex w-[25px] justify-center"><CloseIcon /></button>
            </div>
            <aside className="absolute top-[42px] right-0 flex w-[25px] flex-col border-t border-l border-[#999]">
                {taskPane.map((item, i) => (
                    <button
                        key={item.label}
                        type="button"
                        aria-label={item.label}
                        className={`flex h-[23px] items-center justify-center border-b border-[#999] ${i === 4 ? "bg-white" : "bg-[#d2d2d2]"}`}
                    >
                        {item.icon}
                    </button>
                ))}
            </aside>
        </section>
    );
}

// ---------- Bottom bars ----------

const navPaths = ["M4 3V11M10 3L6 7L10 11Z", "M9 3L5 7L9 11Z", "M5 3L9 7L5 11Z", "M4 3L8 7L4 11ZM10 3V11"];
const navLabels = ["First tab", "Previous tab", "Next tab", "Last tab"];

function BottomTabs() {
    return (
        <div className="flex h-4 shrink-0 border-t border-b border-[#999] bg-[#f6f6f6] pl-[2px] text-[11px] leading-[13px] text-[#222]">
            {navPaths.map((d, i) => (
                <button key={d} type="button" aria-label={navLabels[i]} className="h-full w-[15px] border border-[#9b9b9b] bg-[#c3c3c3]">
                    <svg viewBox="0 0 14 14" className="h-full w-full" aria-hidden="true">
                        <path d={d} fill="#a5a5a5" stroke="#8c8c8c" />
                    </svg>
                </button>
            ))}
            <button type="button" className="w-[55px] pl-1 font-bold">Model</button>
            <button type="button" className="w-[65px] border-x border-[#999] bg-[#d4d4d4]">3D Views</button>
            <button type="button" className="w-[103px] border-r border-[#999] bg-[#d4d4d4] pr-[7px]">Motion Study 1</button>
        </div>
    );
}

function StatusBar() {
    return (
        <footer className="flex h-[14px] shrink-0 items-stretch bg-[#f6f6f6] pl-px text-[11px] leading-none whitespace-nowrap text-[#222]">
            <span className="pt-[3px]">SOLIDWORKS Premium 2016 x64 Edition</span>
            <span className="mr-1 ml-auto pt-[3px]">Under Defined</span>
            <span className="w-2 border-l border-[#ccc]" />
            <span className="w-2 border-l border-[#ccc]" />
            <span className="w-[15px] border-l border-[#ccc]" />
            <button type="button" className="flex items-center gap-[17px] border-l border-[#ccc] pt-[3px] pl-[29px]">
                <span>MMGS</span>
                <span className="rotate-180"><Caret /></span>
            </button>
            <span className="w-[62px]" />
            <Icon size="size-[14px]">
                <path d="M1 8L8 2L16 5L17 9L11 16L2 12Z" fill="#ddd" stroke="#333" strokeWidth="1.200" />
                <path d="M1 8L10 11L16 5M10 11L11 16M5 7L8 5L11 6L8 8Z" stroke="#333" />
            </Icon>
            <span className="w-1" />
        </footer>
    );
}

export default function App() {
    return (
        <div className="h-screen bg-black px-8 font-['Open_Sans',sans-serif]">
            <div className="flex h-full flex-col overflow-hidden">
                <TitleBar />
                <Ribbon />
                <main className="flex min-h-0 flex-1">
                    <div className="relative z-10 flex w-[226px] shrink-0 flex-col">
                        <CommandTabs />
                        <FeatureTree />
                    </div>
                    <Viewport />
                </main>
                <BottomTabs />
                <StatusBar />
            </div>
        </div>
    );
}
